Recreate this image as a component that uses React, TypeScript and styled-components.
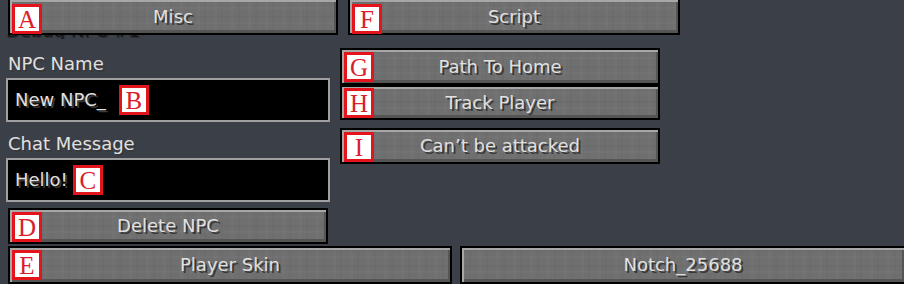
import React from "react";
import styled, { createGlobalStyle } from "styled-components";

const Global = createGlobalStyle`
  html, body { margin: 0; padding: 0; background: #3b3f48; }
  body { font-family: "DejaVu Sans", "Liberation Sans", sans-serif; }
  * { box-sizing: border-box; }
`;

const Screen = styled.div`
  width: 904px;
  height: 284px;
  overflow: hidden;
  background: #3b3f48;
  display: flex;
  flex-direction: column;
`;

const Top = styled.div`
  display: flex;
  align-items: flex-start;
  height: 248px;
`;

const Column = styled.div<{ $w: number }>`
  width: ${(p) => p.$w}px;
  display: flex;
  flex-direction: column;
  align-items: flex-start;
`;

const Bottom = styled.div`
  display: flex;
  gap: 8px;
  padding-left: 8px;
`;

const McButton = styled.div<{ $w: number; $h?: number; $mt?: number; $ml?: number }>`
  position: relative;
  z-index: 1;
  flex: none;
  width: ${(p) => p.$w}px;
  height: ${(p) => p.$h ?? 36}px;
  margin-top: ${(p) => p.$mt ?? 0}px;
  margin-left: ${(p) => p.$ml ?? 0}px;
  border: 2px solid #000;
  background:
    repeating-linear-gradient(90deg, rgba(255,255,255,0.018) 0 3px, transparent 3px 7px, rgba(0,0,0,0.025) 7px 9px, transparent 9px 17px),
    repeating-linear-gradient(0deg, rgba(0,0,0,0.025) 0 2px, transparent 2px 9px, rgba(255,255,255,0.018) 9px 11px, transparent 11px 15px),
    #6f6f6f;
  box-shadow: inset 2px 2px 0 #a7a7a7, inset -2px -3px 0 #555;
  display: flex;
  align-items: center;
  justify-content: center;
  color: #e0e0e0;
  font-size: 18px;
  line-height: 18px;
  text-shadow: 2px 2px 0 #383838;
  white-space: nowrap;
`;

const TitleClip = styled.div`
  margin-top: 0;
  margin-left: 6px;
  height: 4px;
  overflow: hidden;
`;

const TitleText = styled.div`
  margin-top: -11px;
  font-size: 18px;
  line-height: 14px;
  color: #161616;
  text-shadow: 1px 1px 0 #2a2d33;
  white-space: nowrap;
`;

const Label = styled.div<{ $mt: number }>`
  margin-top: ${(p) => p.$mt}px;
  margin-left: 8px;
  height: 18px;
  font-size: 18px;
  line-height: 18px;
  color: #e0e0e0;
  text-shadow: 2px 2px 0 #383838;
  white-space: nowrap;
`;

const Field = styled.div<{ $mt: number }>`
  margin-top: ${(p) => p.$mt}px;
  margin-left: 6px;
  width: 324px;
  height: 44px;
  border: 2px solid #a0a0a0;
  background: #000;
  display: flex;
  align-items: center;
  padding-left: 7px;
  color: #e0e0e0;
  font-size: 18px;
  line-height: 18px;
  text-shadow: 2px 2px 0 #383838;
  white-space: nowrap;
`;

const Badge = styled.span<{ $top?: number; $inline?: boolean; $gap?: number }>`
  position: ${(p) => (p.$inline ? "static" : "absolute")};
  left: 2px;
  top: ${(p) => p.$top ?? 2}px;
  margin-left: ${(p) => (p.$inline ? p.$gap ?? 0 : 0)}px;
  width: 30px;
  height: 30px;
  flex: none;
  background: #fff;
  border: 3px solid #e3141c;
  display: flex;
  align-items: center;
  justify-content: center;
  font-family: "Liberation Serif", "DejaVu Serif", serif;
  font-size: 25px;
  line-height: 1;
  color: #d8202c;
  text-shadow: none;
  padding-top: 1px;
`;

export default function App() {
  return (
    <>
      <Global />
      <Screen>
        <Top>
          <Column $w={340}>
            <McButton $w={330} $h={37} $mt={-2} $ml={8}>
              <Badge $top={4}>A</Badge>
              Misc
            </McButton>
            <TitleClip>
              <TitleText>Debug NPC #1</TitleText>
            </TitleClip>
            <Label $mt={16}>NPC Name</Label>
            <Field $mt={5}>
              New NPC_
              <Badge $inline $gap={13}>B</Badge>
            </Field>
            <Label $mt={13}>Chat Message</Label>
            <Field $mt={5}>
              Hello!
              <Badge $inline $gap={5}>C</Badge>
            </Field>
            <McButton $w={320} $mt={6} $ml={8}>
              <Badge>D</Badge>
              Delete NPC
            </McButton>
          </Column>
          <Column $w={340}>
            <McButton $w={332} $h={37} $mt={-2} $ml={8}>
              <Badge $top={4}>F</Badge>
              Script
            </McButton>
            <McButton $w={320} $h={37} $mt={13}>
              <Badge>G</Badge>
              Path To Home
            </McButton>
            <McButton $w={320} $h={35}>
              <Badge $top={1}>H</Badge>
              Track Player
            </McButton>
            <McButton $w={320} $mt={8}>
              <Badge>I</Badge>
              Can’t be attacked
            </McButton>
          </Column>
        </Top>
        <Bottom>
          <McButton $w={444} $h={38}>
            <Badge>E</Badge>
            Player Skin
          </McButton>
          <McButton $w={446} $h={38}>
            Notch_25688
          </McButton>
        </Bottom>
      </Screen>
    </>
  );
}
